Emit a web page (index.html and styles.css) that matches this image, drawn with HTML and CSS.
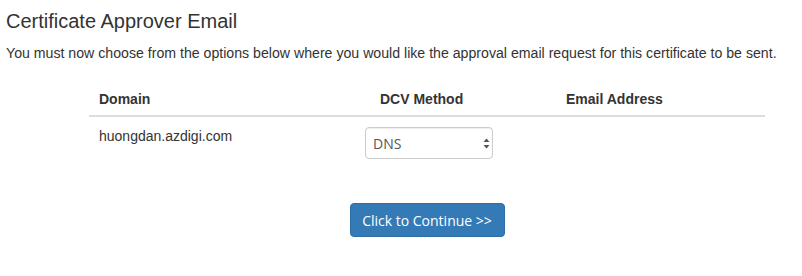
FILE: index.html
```html
<!DOCTYPE html>
<html>
<head>
<meta charset="utf-8">
<link rel="stylesheet" href="styles.css">
</head>
<body>
<div class="page">
  <h1 class="title">Certificate Approver Email</h1>
  <p class="intro">You must now choose from the options below where you would like the approval email request for this certificate to be sent.</p>
  <div class="approver">
    <div class="row head">
      <div class="cell c-domain">Domain</div>
      <div class="cell c-dcv">DCV Method</div>
      <div class="cell c-email">Email Address</div>
    </div>
    <div class="row body">
      <div class="cell c-domain">huongdan.azdigi.com</div>
      <div class="cell c-dcv-sel">
        <div class="select">
          <span>DNS</span>
          <svg class="arrows" width="7" height="11" viewBox="0 0 7 11"><path d="M3.5 0.5 L6.5 4 L0.5 4 Z" fill="#555"/><path d="M3.5 10.5 L6.5 7 L0.5 7 Z" fill="#555"/></svg>
        </div>
      </div>
      <div class="cell c-email"></div>
    </div>
    <div class="actions">
      <button class="btn">Click to Continue &gt;&gt;</button>
    </div>
  </div>
</div>
</body>
</html>
```
FILE: styles.css
```css
html, body {
  margin: 0;
  padding: 0;
  background: #fff;
}
.page {
  padding: 0 0 0 6px;
  font-family: "Liberation Sans", Arial, sans-serif;
  color: #333;
}
.title {
  margin: 9px 0 0;
  font-size: 20px;
  line-height: 24px;
  font-weight: normal;
  color: #333;
}
.intro {
  margin: 10px 0 0;
  font-size: 14.15px;
  line-height: 20px;
}
.approver {
  margin: 20px 0 0 83px;
  width: 676px;
}
.row {
  display: flex;
}
.head {
  border-bottom: 2px solid #ddd;
}
.head .cell {
  padding: 6px 0 6px;
  font-size: 14px;
  line-height: 20px;
  font-weight: bold;
}
.c-domain {
  width: 266px;
  padding-left: 10px !important;
  box-sizing: border-box;
}
.c-dcv {
  width: 201px;
  padding-left: 25px !important;
  box-sizing: border-box;
}
.c-dcv-sel {
  width: 201px;
  padding-left: 10px;
  box-sizing: border-box;
}
.c-email {
  padding-left: 10px !important;
}
.body .cell {
  padding-top: 10px;
}
.body .c-domain {
  font-size: 14px;
  line-height: 20px;
  padding-top: 9px;
}
.select {
  width: 128px;
  height: 32px;
  box-sizing: border-box;
  border: 1px solid #ccc;
  border-radius: 4px;
  box-shadow: inset 0 1px 1px rgba(0,0,0,0.075);
  display: flex;
  align-items: center;
  justify-content: space-between;
  padding: 0 2px 0 7px;
  font-family: "Open Sans", sans-serif;
  font-size: 14px;
  color: #555;
}
.actions {
  display: flex;
  justify-content: center;
  margin-top: 44px;
}
.btn {
  font-family: "Open Sans", sans-serif;
  font-size: 14px;
  color: #fff;
  background: #337ab7;
  border: 1px solid #2e6da4;
  border-radius: 4px;
  height: 34px;
  width: 155px;
  padding: 0;
}
```
